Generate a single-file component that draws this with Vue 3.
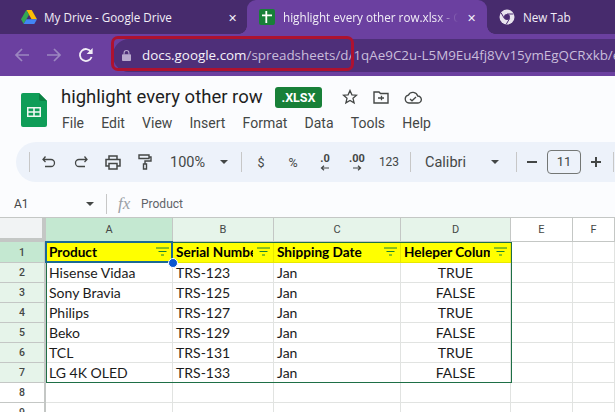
<script setup>
const columns = ['A', 'B', 'C', 'D', 'E', 'F']

const headers = ['Product', 'Serial Number', 'Shipping Date', 'Heleper Column']

const rows = [
  ['Hisense Vidaa', 'TRS-123', 'Jan', 'TRUE'],
  ['Sony Bravia', 'TRS-125', 'Jan', 'FALSE'],
  ['Philips', 'TRS-127', 'Jan', 'TRUE'],
  ['Beko', 'TRS-129', 'Jan', 'FALSE'],
  ['TCL', 'TRS-131', 'Jan', 'TRUE'],
  ['LG 4K OLED', 'TRS-133', 'Jan', 'FALSE']
]

const menus = ['File', 'Edit', 'View', 'Insert', 'Format', 'Data', 'Tools', 'Help']
</script>

<template>
  <div class="app">
    <div class="tabs">
      <div class="tab tab-first">
        <svg class="favicon" viewBox="0 0 16 14" width="16" height="14">
          <path d="M5.3 0h5.4l5.3 9.2h-5.4z" fill="#fbbc04" />
          <path d="M5.3 0 0 9.2 2.7 14l5.3-9.2z" fill="#34a853" />
          <path d="M5.4 9.2 2.7 14h10.6l2.7-4.8z" fill="#4285f4" />
        </svg>
        <span class="tab-title">My Drive - Google Drive</span>
        <span class="tab-close">✕</span>
      </div>
      <div class="tab tab-active">
        <svg class="favicon" viewBox="0 0 16 16" width="16" height="16">
          <rect width="16" height="16" rx="2" fill="#188038" />
          <path d="M3 5.500h10v1.800H8.200V14H6.400V7.300H3zM6.400 2h1.800v3.500H6.400z" fill="#fff" />
        </svg>
        <span class="tab-title tab-fade">highlight every other row.xlsx - Goo</span>
        <span class="tab-close">✕</span>
      </div>
      <div class="tab tab-last">
        <svg class="favicon" viewBox="0 0 16 16" width="16" height="16">
          <circle cx="8" cy="8" r="7.5" fill="#e8e4ee" />
          <circle cx="8" cy="8" r="3" fill="#4a2c72" />
          <path d="M8 5h6.400M5.400 9.500 2.200 4M10.600 9.500 7.400 15" stroke="#4a2c72" stroke-width="1" />
        </svg>
        <span class="tab-title">New Tab</span>
      </div>
    </div>

    <div class="nav">
      <svg class="nav-icon" viewBox="0 0 16 16" width="16" height="16">
        <path d="M15 8H2M8 2 2 8l6 6" fill="none" stroke="#9c86c0" stroke-width="1.7" />
      </svg>
      <svg class="nav-icon" viewBox="0 0 16 16" width="16" height="16">
        <path d="M1 8h13M8 2l6 6-6 6" fill="none" stroke="#9c86c0" stroke-width="1.7" />
      </svg>
      <svg class="nav-icon" viewBox="0 0 16 16" width="16" height="16">
        <path d="M13.600 10a6 6 0 1 1-.6-5.200" fill="none" stroke="#f1edf6" stroke-width="1.8" />
        <path d="M14.600 1v6h-6z" fill="#f1edf6" />
      </svg>
      <div class="address">
        <svg class="lock" viewBox="0 0 10 12" width="9" height="11">
          <rect y="4.500" width="10" height="7.500" rx="1" fill="#b8a9cd" />
          <path d="M2.300 5V3.200a2.700 2.700 0 0 1 5.400 0V5" fill="none" stroke="#b8a9cd" stroke-width="1.2" />
        </svg>
        <span class="url"><b>docs.google.com</b>/spreadsheets/d/1qAe9C2u-L5M9Eu4fj8Vv15ymEgQCRxkb/edit</span>
      </div>
    </div>

    <div class="doc-head">
      <svg class="sheets-logo" viewBox="0 0 26 34" width="26" height="34">
        <path d="M2 0h16l8 8v24a2 2 0 0 1-2 2H2a2 2 0 0 1-2-2V2a2 2 0 0 1 2-2z" fill="#0f9d58" />
        <path d="M18 0l8 8h-6a2 2 0 0 1-2-2z" fill="#0b8043" />
        <path d="M6 14h14v10H6zM7.500 15.500v2.700h4.700v-2.700zm6.300 0v2.700h4.700v-2.700zm-6.300 4.300v2.700h4.700v-2.700zm6.300 0v2.700h4.700v-2.700z" fill="#f1f8f3" fill-rule="evenodd" />
      </svg>
      <div class="doc-info">
        <div class="title-row">
          <span class="doc-title">highlight every other row</span>
          <span class="badge">.XLSX</span>
          <svg class="title-icon star" viewBox="0 0 16 16" width="16" height="16">
            <path d="M8 1.500l1.900 4.300 4.700.4-3.600 3.100 1.100 4.600L8 11.500l-4.100 2.400L5 9.300 1.400 6.200l4.700-.4z" fill="none" stroke="#444746" stroke-width="1.3" />
          </svg>
          <svg class="title-icon folder" viewBox="0 0 16 14" width="16" height="14">
            <path d="M1 2h5l1.500 1.500H15V13H1z" fill="none" stroke="#444746" stroke-width="1.4" />
            <path d="M5 8h6M8.500 5.800v4.400" stroke="#444746" stroke-width="1.3" />
          </svg>
          <svg class="title-icon cloud" viewBox="0 0 18 14" width="18" height="14">
            <path d="M5 13a4 4 0 0 1-.6-7.900A5 5 0 0 1 13.700 6 3.500 3.500 0 0 1 14 13z" fill="none" stroke="#444746" stroke-width="1.3" />
            <path d="M6 9l2 1.800L12 7" fill="none" stroke="#444746" stroke-width="1.3" />
          </svg>
        </div>
        <div class="menu-row">
          <span v-for="menu in menus" :key="menu">{{ menu }}</span>
        </div>
      </div>
    </div>

    <div class="toolbar">
      <i class="divider" />
      <div class="tool w32 first">
        <svg viewBox="0 0 14 14" width="14" height="14">
          <path d="M3.500 1.500 1 4.500l2.500 2.500M1 4.500h8a3.500 3.500 0 0 1 0 7H3" fill="none" stroke="#444746" stroke-width="1.3" />
        </svg>
      </div>
      <div class="tool w32">
        <svg viewBox="0 0 14 14" width="14" height="14">
          <path d="M10.500 1.500l2.500 3-2.500 2.500M13 4.500H5a3.500 3.500 0 0 0 0 7h6" fill="none" stroke="#444746" stroke-width="1.3" />
        </svg>
      </div>
      <div class="tool w32">
        <svg viewBox="0 0 16 15" width="16" height="15">
          <path d="M4 4V1h8v3M4 11H1V4.500h14V11h-3M4 8.500h8V14H4z" fill="none" stroke="#444746" stroke-width="1.500" />
        </svg>
      </div>
      <div class="tool w32">
        <svg viewBox="0 0 14 16" width="14" height="16">
          <path d="M1 1h10v3.500H1zM11 3h2v4H7v3M5.500 10h3v5h-3z" fill="none" stroke="#444746" stroke-width="1.400" />
        </svg>
      </div>
      <span class="zoom-value">100%</span>
      <i class="caret zoom-caret" />
      <i class="divider zoom-divider" />
      <div class="tool w32 small-text dollar">$</div>
      <div class="tool w32 small-text">%</div>
      <div class="tool w32 decimal">
        <b>.0</b>
        <svg viewBox="0 0 10 6" width="10" height="6"><path d="M9 3H2M4 .8 1.500 3 4 5.200" fill="none" stroke="#444746" stroke-width="1.200" /></svg>
      </div>
      <div class="tool w32 decimal">
        <b>.00</b>
        <svg viewBox="0 0 10 6" width="10" height="6"><path d="M1 3h7M6 .8 8.500 3 6 5.200" fill="none" stroke="#444746" stroke-width="1.200" /></svg>
      </div>
      <span class="format-123">123</span>
      <i class="divider" />
      <span class="font-name">Calibri</span>
      <i class="caret font-caret" />
      <i class="divider font-divider" />
      <span class="stepper minus" />
      <span class="size-box">11</span>
      <span class="stepper plus" />
      <i class="divider last-divider" />
    </div>

    <div class="formula">
      <span class="cell-ref">A1</span>
      <i class="caret ref-caret" />
      <i class="divider ref-divider" />
      <span class="fx">fx</span>
      <span class="formula-text">Product</span>
    </div>

    <div class="sheet">
      <div class="corner" />
      <div
        v-for="(col, i) in columns"
        :key="col"
        class="col-head"
        :class="{ 'head-selected': i === 0, 'head-range': i > 0 && i < 4 }"
      >{{ col }}</div>

      <div class="row-head head-selected">1</div>
      <div v-for="text in headers" :key="text" class="cell header-cell">
        <span class="clip">{{ text }}</span>
        <svg class="filter" viewBox="0 0 13 9" width="13" height="9">
          <path d="M0 1h13M2.500 4.500h8M5 8h3" stroke="#188038" stroke-width="1" />
        </svg>
      </div>
      <div class="cell" />
      <div class="cell" />

      <template v-for="(row, r) in rows" :key="r">
        <div class="row-head head-range">{{ r + 2 }}</div>
        <div v-for="(text, c) in row" :key="c" class="cell" :class="{ 'cell-center': c === 3 }">{{ text }}</div>
        <div class="cell" />
        <div class="cell" />
      </template>

      <template v-for="n in [8, 9]" :key="n">
        <div class="row-head">{{ n }}</div>
        <div v-for="c in 6" :key="c" class="cell" />
      </template>

      <div class="range-outline" />
      <div class="active-cell" />
      <div class="fill-handle" />
    </div>

    <div class="annotation" />
  </div>
</template>

<style scoped>
.app {
  position: relative;
  width: 615px;
  height: 412px;
  overflow: hidden;
  background: #fbfcfe;
  font-family: "Roboto", "Liberation Sans", sans-serif;
  color: #444746;
}

.tabs {
  display: flex;
  height: 34px;
  background: #472b6d;
  font-family: "Open Sans", "Liberation Sans", sans-serif;
  font-size: 11.700px;
  color: #f2eef7;
}

.tab {
  display: flex;
  align-items: center;
  height: 34px;
  flex-shrink: 0;
}

.tab-first {
  width: 247px;
  padding: 0 8px 0 21px;
  box-sizing: border-box;
}

.tab-active {
  position: relative;
  width: 240px;
  padding: 0 9px 0 12px;
  box-sizing: border-box;
  background: #6b40a0;
  border-radius: 9px 9px 0 0;
}

.tab-active::before,
.tab-active::after {
  content: "";
  position: absolute;
  bottom: 0;
  width: 8px;
  height: 8px;
}

.tab-active::before {
  left: -8px;
  background: radial-gradient(circle at 0 0, transparent 7.500px, #6b40a0 8px);
}

.tab-active::after {
  right: -8px;
  background: radial-gradient(circle at 100% 0, transparent 7.500px, #6b40a0 8px);
}

.tab-last {
  padding-left: 12px;
}

.favicon {
  flex-shrink: 0;
  margin-right: 8px;
}

.tab-first .favicon {
  margin-right: 7px;
}

.tab-title {
  flex: 1;
  overflow: hidden;
  white-space: nowrap;
}

.tab-fade {
  -webkit-mask-image: linear-gradient(to right, #000 88%, transparent 100%);
  mask-image: linear-gradient(to right, #000 88%, transparent 100%);
}

.tab-close {
  margin-left: 6px;
  font-size: 11px;
  width: 14px;
  text-align: center;
}

.nav {
  display: flex;
  align-items: center;
  height: 42px;
  padding-left: 14px;
  background: #6b40a0;
  box-sizing: border-box;
}

.nav-icon {
  flex-shrink: 0;
  margin-right: 16px;
}

.address {
  display: flex;
  align-items: center;
  flex: 1;
  height: 33px;
  margin-left: 3px;
  padding-left: 9px;
  background: #4e2f79;
  border-radius: 16px 0 0 16px;
  overflow: hidden;
  white-space: nowrap;
  font-family: "Open Sans", "Liberation Sans", sans-serif;
  font-size: 13.400px;
  color: #c9bddb;
}

.lock {
  flex-shrink: 0;
}

.url {
  flex-shrink: 0;
  margin-left: 11px;
}

.url b {
  font-weight: 400;
  color: #f5f2f9;
}

.annotation {
  position: absolute;
  left: 111px;
  top: 36px;
  width: 243px;
  height: 35px;
  box-sizing: border-box;
  border: 3px solid #ad1230;
  border-radius: 7px;
}

.doc-head {
  display: flex;
  height: 66px;
  padding: 17px 0 0 21px;
  box-sizing: border-box;
}

.sheets-logo {
  flex-shrink: 0;
}

.doc-info {
  margin-left: 14px;
  margin-top: -8px;
}

.title-row {
  display: flex;
  align-items: center;
  height: 24px;
}

.doc-title {
  font-size: 18.500px;
  color: #1f1f1f;
  width: 214px;
  white-space: nowrap;
}

.badge {
  width: 47px;
  height: 21px;
  line-height: 21px;
  text-align: center;
  background: #188038;
  border-radius: 3px;
  color: #fff;
  font-size: 12.500px;
  font-weight: 700;
}

.title-icon {
  margin-left: 15px;
}

.star {
  margin-left: 20px;
}

.menu-row {
  display: flex;
  gap: 17.200px;
  margin-top: 3px;
  margin-left: 1px;
  font-size: 14px;
  line-height: 22px;
}

.toolbar {
  display: flex;
  align-items: center;
  height: 40px;
  width: 640px;
  margin-left: 16px;
  padding-left: 13px;
  box-sizing: border-box;
  background: #edf2fa;
  border-radius: 20px;
  font-size: 14.500px;
}

.divider {
  display: block;
  flex-shrink: 0;
  width: 1px;
  height: 20px;
  background: #c7c7c7;
}

.tool {
  display: flex;
  flex-direction: column;
  align-items: center;
  justify-content: center;
  flex-shrink: 0;
  height: 24px;
}

.w32 {
  width: 32px;
}

.first {
  margin-left: 3px;
}

.small-text {
  font-size: 12.500px;
}

.dollar {
  margin-left: 3px;
}

.decimal b {
  font-size: 11px;
  font-weight: 700;
  line-height: 10px;
}

.decimal svg {
  margin-top: 1px;
}

.zoom-value {
  width: 38px;
  margin-left: 9px;
}

.caret {
  display: block;
  flex-shrink: 0;
  width: 0;
  height: 0;
  border-left: 4px solid transparent;
  border-right: 4px solid transparent;
  border-top: 4px solid #444746;
}

.zoom-caret {
  margin-left: 12px;
}

.zoom-divider {
  margin-left: 13px;
}

.format-123 {
  flex-shrink: 0;
  width: 30px;
  margin: 0 6px 0 1px;
  font-size: 12px;
  text-align: center;
}

.font-name {
  flex-shrink: 0;
  width: 58px;
  margin-left: 14px;
  font-size: 14.500px;
}

.font-caret {
  margin-left: 8px;
}

.font-divider {
  margin-left: 17px;
}

.stepper {
  position: relative;
  display: block;
  flex-shrink: 0;
  width: 10px;
  height: 10px;
  margin: 0 10px;
}

.stepper::before {
  content: "";
  position: absolute;
  left: 0;
  top: 4px;
  width: 10px;
  height: 2px;
  background: #444746;
}

.plus::after {
  content: "";
  position: absolute;
  left: 4px;
  top: 0;
  width: 2px;
  height: 10px;
  background: #444746;
}

.size-box {
  flex-shrink: 0;
  width: 34px;
  height: 24px;
  line-height: 22px;
  box-sizing: border-box;
  text-align: center;
  border: 1px solid #747775;
  border-radius: 4px;
  font-size: 13px;
}

.last-divider {
  margin-left: 2px;
}

.formula {
  display: flex;
  align-items: center;
  height: 36px;
  padding: 8px 0 0 14px;
  box-sizing: border-box;
  font-size: 12px;
}

.cell-ref {
  width: 72px;
}

.ref-divider {
  margin-left: 12px;
}

.fx {
  margin-left: 11px;
  width: 23px;
  font-family: "Liberation Serif", serif;
  font-style: italic;
  font-size: 17px;
  color: #9aa0a6;
}

.formula-text {
  color: #5f6368;
}

.sheet {
  position: relative;
  display: grid;
  grid-template-columns: 46px 127px 101px 127px 110px 62px 42px;
  grid-template-rows: 24px 21px repeat(8, 20px);
  background: #fff;
  font-family: "Lato", "Liberation Sans", sans-serif;
  font-size: 14px;
  color: #1b1b1b;
  border-top: 1px solid #c4c7c5;
  margin-top: -1px;
}

.corner {
  background: #f1f3f4;
  border-right: 4px solid #c4c7c5;
  border-bottom: 4px solid #c4c7c5;
  box-sizing: border-box;
}

.col-head,
.row-head {
  display: flex;
  align-items: center;
  justify-content: center;
  box-sizing: border-box;
  font-family: "Roboto", "Liberation Sans", sans-serif;
  font-size: 11px;
  color: #444746;
  border-right: 1px solid #c4c7c5;
  border-bottom: 1px solid #c4c7c5;
}

.row-head {
  border-right-width: 2px;
  font-size: 10.500px;
  font-weight: 500;
}

.head-selected {
  background: #c4e8d1;
}

.head-range {
  background: #e6f4ea;
}

.cell {
  display: flex;
  align-items: center;
  min-width: 0;
  padding: 0 3px;
  box-sizing: border-box;
  overflow: hidden;
  white-space: nowrap;
  border-right: 1px solid #e1e3e1;
  border-bottom: 1px solid #e1e3e1;
}

.cell-center {
  justify-content: center;
}

.header-cell {
  position: relative;
  background: #ffff00;
  font-size: 13.600px;
  font-weight: 700;
  color: #000;
  border-right-color: #e8e800;
  border-bottom-color: #e8e800;
}

.clip {
  display: block;
  overflow: hidden;
  width: calc(100% - 17.500px);
}

.filter {
  position: absolute;
  right: 3px;
  top: 5px;
}

.range-outline {
  position: absolute;
  left: 46px;
  top: 24px;
  width: 466px;
  height: 141px;
  box-sizing: border-box;
  border: 1px solid #1e6f46;
}

.active-cell {
  position: absolute;
  left: 45px;
  top: 23px;
  width: 128px;
  height: 22px;
  box-sizing: border-box;
  border: 2px solid #1b6a94;
}

.fill-handle {
  position: absolute;
  left: 168px;
  top: 40px;
  width: 10px;
  height: 10px;
  box-sizing: border-box;
  border: 1px solid #fff;
  border-radius: 50%;
  background: #0b57d0;
}
</style>
